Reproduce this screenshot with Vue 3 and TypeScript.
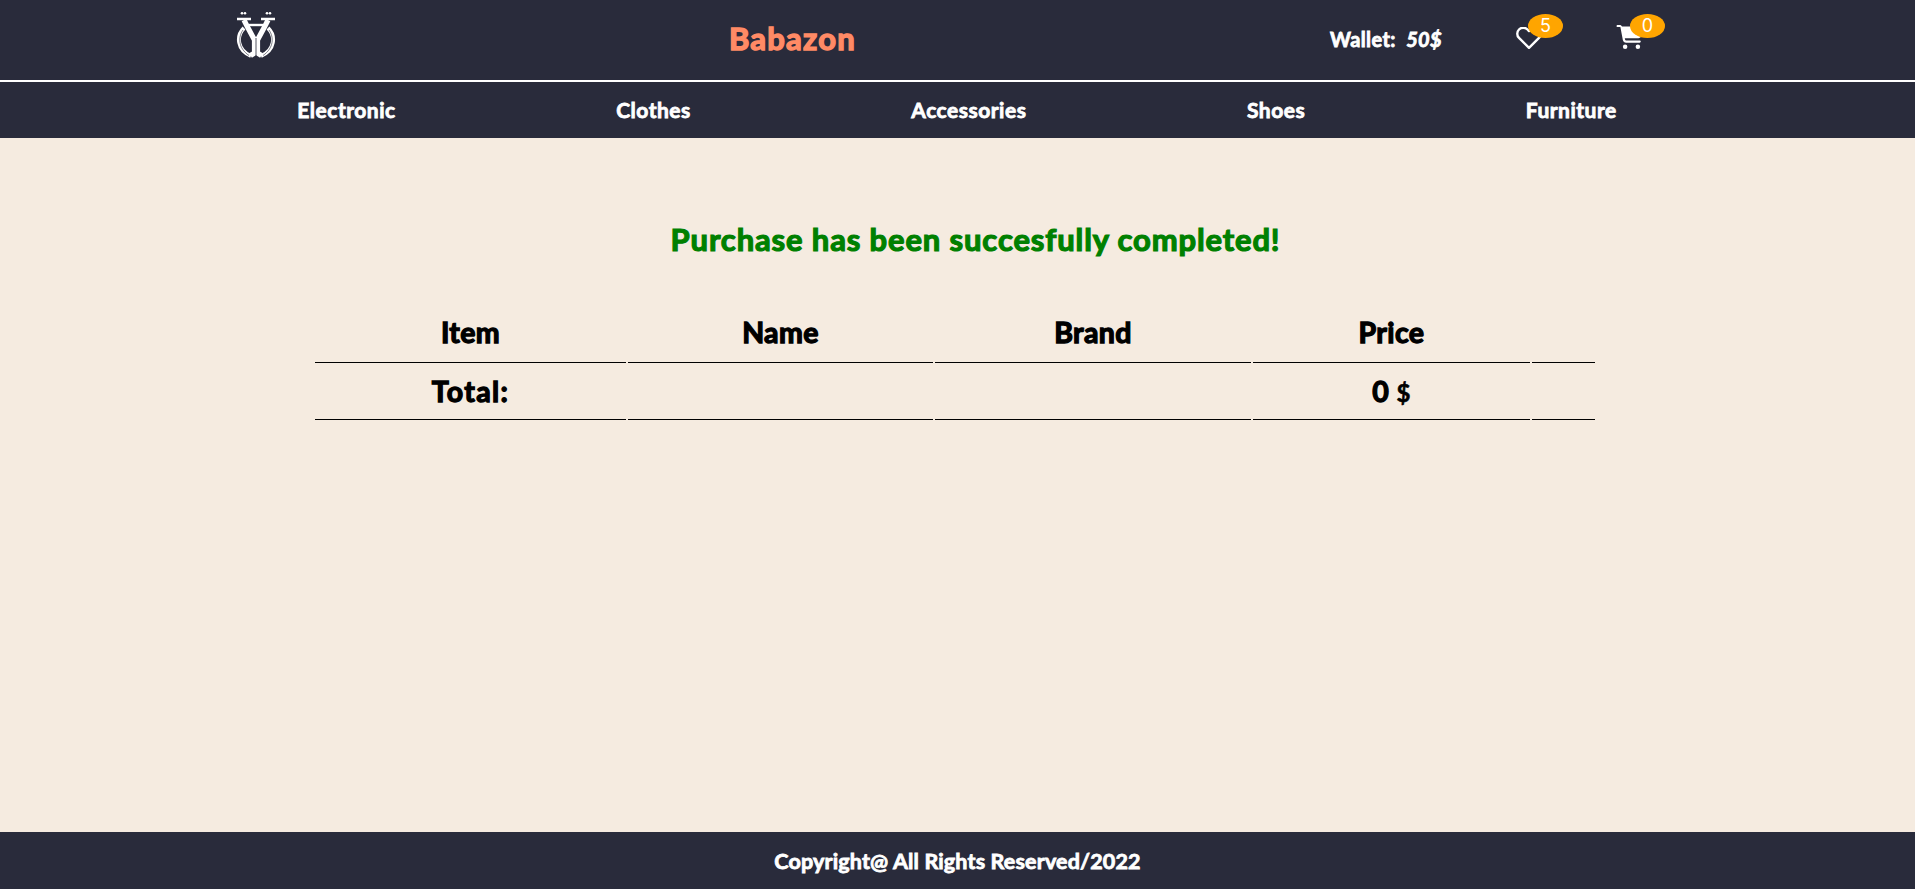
<script setup lang="ts">
const categories: string[] = ['Electronic', 'Clothes', 'Accessories', 'Shoes', 'Furniture']
const columns: string[] = ['Item', 'Name', 'Brand', 'Price', '']
</script>

<template>
  <div class="page">
    <header class="topbar">
      <svg class="logo" viewBox="0 0 40 47" aria-label="logo">
        <g fill="none" stroke="#fff">
          <path d="M8 17C0 25 1 39 15 45" stroke-width="4" />
          <path d="M32 17C40 25 39 39 25 45" stroke-width="4" />
          <path d="M7 19C2 26 2 37 13 44.500" stroke="#292b3b" stroke-width=".6" />
          <path d="M33 19C38 26 38 37 27 44.500" stroke="#292b3b" stroke-width=".6" />
          <path d="M1 8h14M25 8h14" stroke-width="2.600" />
          <path d="M8 9l3 6 7.500 14v13l-4 2.500M32 9l-3 6-7.500 14v13l4 2.500" stroke-width="5.200" />
          <path d="M13 14h14" stroke-width="2.400" />
        </g>
        <path d="M16.500 16.500h7L20 24z" fill="#292b3b" />
        <path d="M20 27v20" stroke="#292b3b" stroke-width=".8" />
        <g fill="#fff">
          <circle cx="6" cy="2.200" r="1.300" /><circle cx="9" cy="2.200" r="1.300" />
          <circle cx="31" cy="2.200" r="1.300" /><circle cx="34" cy="2.200" r="1.300" />
        </g>
      </svg>
      <div class="brand">Babazon</div>
      <div class="actions">
        <div class="wallet">Wallet: <em>50$</em></div>
        <div class="icon-link heart-link">
          <svg viewBox="2 3 20 18.500" class="heart"><path d="M12 20.500 3.600 12.200a5 5 0 0 1 0-7.100 5 5 0 0 1 7.100 0L12 6.400l1.300-1.300a5 5 0 0 1 7.100 0 5 5 0 0 1 0 7.100z" fill="none" stroke="#fff" stroke-width="2" stroke-linejoin="round" /></svg>
          <span class="badge">5</span>
        </div>
        <div class="icon-link cart-link">
          <svg viewBox="0 0 576 512" class="cart"><path fill="#fff" d="M0 24C0 11 11 0 24 0h45c22 0 41 13 50 32h411c26 0 46 25 39 50l-41 152c-8 28-33 47-62 47H177l5 29c2 11 12 20 24 20h288c13 0 24 11 24 24s-11 24-24 24H206c-35 0-65-25-71-59L84 48c-1-5-5-8-10-8H24C11 40 0 37 0 24z" /><circle cx="184" cy="464" r="48" fill="#fff" /><circle cx="456" cy="464" r="48" fill="#fff" /></svg>
          <span class="badge cart-badge">0</span>
        </div>
      </div>
    </header>
    <nav class="menu">
      <a v-for="c in categories" :key="c">{{ c }}</a>
    </nav>
    <main class="content">
      <h2 class="success">Purchase has been succesfully completed!</h2>
      <table class="summary">
        <colgroup>
          <col class="c1" /><col class="c2" /><col class="c3" /><col class="c4" /><col class="c5" />
        </colgroup>
        <thead>
          <tr><th v-for="(c, i) in columns" :key="i">{{ c }}</th></tr>
        </thead>
        <tbody>
          <tr>
            <td class="total">Total:</td>
            <td></td>
            <td></td>
            <td>0 <span class="cur">$</span></td>
            <td></td>
          </tr>
        </tbody>
      </table>
    </main>
    <footer class="foot">Copyright@ All Rights Reserved/2022</footer>
  </div>
</template>

<style>
html, body { margin: 0; background: #f5ebe0; }
</style>

<style scoped>
.page {
  display: flex;
  flex-direction: column;
  min-height: 889px;
  font-family: "Lato", "Open Sans", sans-serif;
  font-weight: 700;
  background: #f5ebe0;
}
.topbar {
  height: 80px;
  box-sizing: border-box;
  background: #292b3b;
  color: #fff;
  display: flex;
  align-items: center;
  padding-left: 236px;
}
.logo { width: 40px; height: 47px; margin-top: -11px; flex: none; }
.brand {
  margin-left: 453px;
  color: #ff8a65;
  font-size: 31px;
  letter-spacing: 1.200px;
  -webkit-text-stroke: 1.400px #ff8a65;
  width: 400px;
  margin-top: -5px;
}
.actions { display: flex; align-items: center; margin-left: 201px; }
.wallet { font-size: 20px; width: 185px; -webkit-text-stroke: .8px #fff; letter-spacing: .4px; margin-top: -3px; }
.wallet em { margin-left: 5px; }
.icon-link { position: relative; height: 30px; display: flex; align-items: center; }
.heart-link { width: 100px; }
.heart { width: 26px; height: 22px; margin-top: -4px; margin-left: 1px; }
.cart { width: 28px; height: 24px; margin-top: -6px; margin-left: 1px; }
.badge {
  position: absolute;
  left: 13px;
  top: -11px;
  width: 35px;
  height: 24px;
  border-radius: 50%;
  background: orange;
  color: #fff;
  font: 400 18px/24px "Inter", sans-serif;
  text-align: center;
}
.cart-badge { left: 15px; }
.menu {
  height: 56px;
  margin-top: 2px;
  padding: 0 188px 2px 187px;
  background: #292b3b;
  display: flex;
  justify-content: space-around;
  align-items: center;
  box-sizing: border-box;
  box-shadow: 0 -2px 0 #fff;
  font-size: 21px;
  letter-spacing: .5px;
  -webkit-text-stroke: .8px #fff;
  color: #fff;
}
.content { flex: 1; display: flex; flex-direction: column; align-items: center; }
.success {
  margin: 81px 0 0 36px;
  font-size: 31px;
  line-height: 40px;
  font-weight: 700;
  letter-spacing: .85px;
  -webkit-text-stroke: 1.200px green;
  color: green;
}
.summary {
  margin: 48px 0 0 -5px;
  width: 1284px;
  table-layout: fixed;
  border-collapse: separate;
  border-spacing: 2px 0;
  font-size: 28.500px;
  letter-spacing: .4px;
  -webkit-text-stroke: 1.300px #000;
  color: #000;
}
.c1 { width: 311px; } .c2 { width: 305px; } .c3 { width: 316px; } .c4 { width: 277px; }
.summary th, .summary td {
  height: 57px;
  padding: 0;
  text-align: center;
  font-weight: 700;
  border-bottom: 1px solid #000;
  box-sizing: border-box;
}
.summary th { height: 56px; padding-bottom: 5px; }
.summary .total { letter-spacing: 1.400px; }
.cur { font-size: 24px; -webkit-text-stroke: .6px #000; }
.foot {
  height: 57px;
  background: #292b3b;
  color: #fff;
  display: flex;
  align-items: center;
  justify-content: center;
  font-size: 21.500px;
  letter-spacing: .15px;
  -webkit-text-stroke: .8px #fff;
}
</style>
